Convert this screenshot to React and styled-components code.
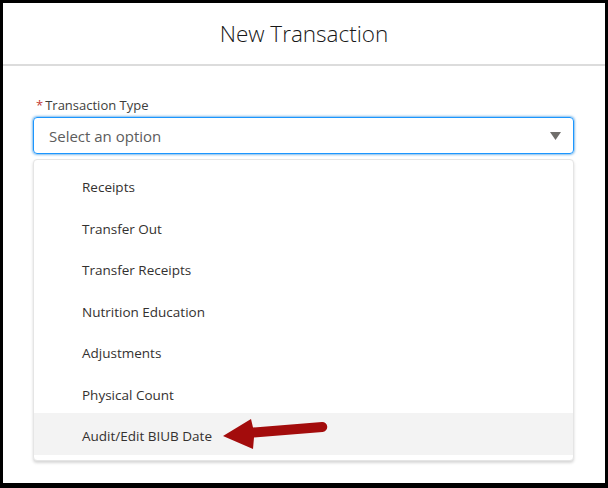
import styled, { createGlobalStyle } from 'styled-components';

const GlobalStyle = createGlobalStyle`
  html, body {
    margin: 0;
    padding: 0;
    background: #ffffff;
  }
  * {
    box-sizing: border-box;
  }
`;

const options = [
  'Receipts',
  'Transfer Out',
  'Transfer Receipts',
  'Nutrition Education',
  'Adjustments',
  'Physical Count',
  'Audit/Edit BIUB Date',
];

const Frame = styled.div`
  position: relative;
  width: 608px;
  height: 488px;
  border: 3px solid #000;
  border-bottom-width: 5px;
  background: #fff;
  display: flex;
  flex-direction: column;
  font-family: 'Open Sans', 'Noto Sans', sans-serif;
  overflow: hidden;
`;

const Header = styled.div`
  height: 63px;
  display: flex;
  align-items: center;
  justify-content: center;
  border-bottom: 2px solid #dcdcdc;
`;

const Title = styled.h2`
  margin: 0;
  font-size: 22.5px;
  font-weight: 300;
  color: #181818;
`;

const Body = styled.div`
  padding: 30px 31px 0 30px;
  display: flex;
  flex-direction: column;
`;

const Label = styled.label`
  display: flex;
  align-items: center;
  height: 18px;
  font-size: 13px;
  color: #3e3e3c;
  margin-bottom: 3px;
  padding-left: 3px;
`;

const Required = styled.span`
  color: #c23934;
  margin-right: 2px;
`;

const Combobox = styled.div`
  height: 37px;
  border: 1px solid #1b96ff;
  border-radius: 4px;
  box-shadow: 0 0 3px #0176d3;
  display: flex;
  align-items: center;
  justify-content: space-between;
  padding: 0 12px 0 15px;
`;

const Placeholder = styled.span`
  font-size: 15px;
  color: #5c5c5c;
`;

const Caret = styled.svg`
  width: 11px;
  height: 8px;
  fill: #706e6b;
`;

const Listbox = styled.ul`
  list-style: none;
  margin: 5px 0 0;
  padding: 4px 0 5px;
  border: 1px solid #e5e5e5;
  border-radius: 4px;
  box-shadow: 0 2px 3px rgba(0, 0, 0, 0.16);
  background: #fff;
`;

const Option = styled.li`
  height: 41.5px;
  display: flex;
  align-items: center;
  padding: 5px 0 0 48px;
  font-size: 13.5px;
  color: #34312f;
  background: ${(p) => (p.$active ? '#f3f3f3' : 'transparent')};
`;

const Pointer = styled.svg`
  position: absolute;
  left: 217px;
  top: 413px;
  width: 112px;
  height: 38px;
`;

const App = () => {
  return (
    <>
      <GlobalStyle />
      <Frame>
        <Header>
          <Title>New Transaction</Title>
        </Header>
        <Body>
          <Label>
            <Required>*</Required>Transaction Type
          </Label>
          <Combobox>
            <Placeholder>Select an option</Placeholder>
            <Caret viewBox="0 0 11 8">
              <path d="M0 0 H11 L5.5 8 Z" />
            </Caret>
          </Combobox>
          <Listbox>
            {options.map((o, i) => (
              <Option key={o} $active={i === options.length - 1}>
                {o}
              </Option>
            ))}
          </Listbox>
        </Body>
        <Pointer viewBox="0 0 112 38">
          <path
            d="M3 20 L31 3 L33 11.5 L102 6 A5 5 0 0 1 102.5 16 L34 21.5 L33 33 Z"
            fill="#a30c0c"
          />
        </Pointer>
      </Frame>
    </>
  );
};

export default App;
